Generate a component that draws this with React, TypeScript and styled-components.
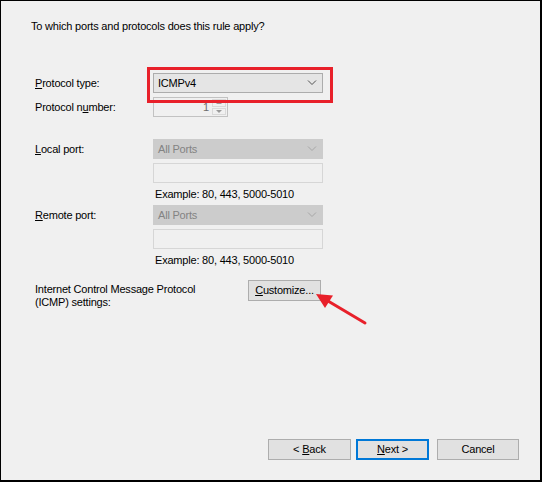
import React from "react";
import styled, { createGlobalStyle } from "styled-components";

const GlobalStyle = createGlobalStyle`
  html, body {
    margin: 0;
    padding: 0;
    background: #fff;
  }
  * {
    box-sizing: border-box;
  }
`;

const Dialog = styled.div`
  position: relative;
  width: 542px;
  height: 482px;
  display: flex;
  flex-direction: column;
  background: #f0f0f0;
  border-style: solid;
  border-color: #000;
  border-width: 1px 2px 2px 1px;
  font-family: "Liberation Sans", Arial, sans-serif;
  font-size: 11px;
  letter-spacing: -0.2px;
  line-height: 15px;
  color: #000;
`;

const Question = styled.p`
  margin: 18px 0 0 30px;
`;

const Form = styled.div`
  display: flex;
  flex-direction: column;
  padding-left: 34px;
  margin-top: 39px;
`;

const FieldRow = styled.div<{ $top: number }>`
  display: grid;
  grid-template-columns: 118px 170px;
  align-items: start;
  margin-top: ${(p) => p.$top}px;
`;

const Label = styled.span`
  height: 20px;
  line-height: 20px;
  white-space: nowrap;
`;

const Stack = styled.div`
  display: flex;
  flex-direction: column;
`;

const Select = styled.div<{ $disabled?: boolean }>`
  height: 20px;
  display: flex;
  align-items: center;
  justify-content: space-between;
  padding-left: 4px;
  border: 1px solid ${(p) => (p.$disabled ? "#cccccc" : "#acacac")};
  background: ${(p) => (p.$disabled ? "#cccccc" : "#e5e5e5")};
  color: ${(p) => (p.$disabled ? "#838383" : "#000")};
`;

const Chevron = styled.svg`
  margin-right: 5px;
`;

const TextBox = styled.div`
  height: 20px;
  margin-top: 4px;
  border: 1px solid #d6d6d6;
  background: #f0f0f0;
`;

const Hint = styled.span`
  margin-top: 4px;
  padding-left: 2px;
  white-space: nowrap;
`;

const Spinner = styled.div`
  width: 75px;
  height: 20px;
  display: flex;
  border: 1px solid #c2c2c2;
  background: #f0f0f0;
`;

const SpinValue = styled.span`
  flex: 1;
  text-align: right;
  padding-right: 3px;
  line-height: 18px;
  color: #6d6d6d;
`;

const SpinButtons = styled.div`
  width: 15px;
  display: flex;
  flex-direction: column;
  gap: 1px;
  padding: 1px 1px 1px 0;
`;

const SpinHalf = styled.div<{ $down?: boolean }>`
  flex: 1;
  display: flex;
  align-items: center;
  justify-content: center;
  border: 1px solid #d9d9d9;
  background: #f0f0f0;

  &::after {
    content: "";
    border-left: 3px solid transparent;
    border-right: 3px solid transparent;
    ${(p) =>
      p.$down ? "border-top: 3px solid #9a9a9a;" : "border-bottom: 3px solid #9a9a9a;"}
  }
`;

const IcmpRow = styled.div`
  display: flex;
  align-items: flex-start;
  margin-top: 12px;
`;

const IcmpLabel = styled.span`
  width: 213px;
  margin-top: 3px;
  line-height: 13px;
`;

const PushButton = styled.button<{ $width: number; $default?: boolean; $spaced?: boolean }>`
  width: ${(p) => p.$width}px;
  height: 21px;
  margin: 0 0 0 ${(p) => (p.$spaced ? 3 : 0)}px;
  padding: 0;
  font: inherit;
  letter-spacing: inherit;
  color: #000;
  background: #e1e1e1;
  border: ${(p) => (p.$default ? "2px solid #0078d7" : "1px solid #adadad")};
`;

const ButtonBar = styled.div`
  display: flex;
  justify-content: flex-end;
  gap: 5px;
  margin-top: auto;
  margin-bottom: 20px;
  padding-right: 21px;
`;

const Highlight = styled.div`
  position: absolute;
  left: 146px;
  top: 66px;
  width: 186px;
  height: 36px;
  border: 3px solid #e8202a;
  pointer-events: none;
`;

const Pointer = styled.svg`
  position: absolute;
  left: -1px;
  top: -1px;
  pointer-events: none;
`;

const ChevronIcon = ({ disabled }: { disabled?: boolean }) => (
  <Chevron width="10" height="6" viewBox="0 0 10 6">
    <polyline
      points="1,0.5 5,4.5 9,0.5"
      fill="none"
      stroke={disabled ? "#a6a6a6" : "#505050"}
      strokeWidth="1"
    />
  </Chevron>
);

const PortField = ({ top, label }: { top: number; label: React.ReactNode }) => (
  <FieldRow $top={top}>
    <Label>{label}</Label>
    <Stack>
      <Select $disabled>
        All Ports
        <ChevronIcon disabled />
      </Select>
      <TextBox />
      <Hint>Example: 80, 443, 5000-5010</Hint>
    </Stack>
  </FieldRow>
);

export default function App() {
  return (
    <>
      <GlobalStyle />
      <Dialog>
        <Question>To which ports and protocols does this rule apply?</Question>

        <Form>
          <FieldRow $top={0}>
            <Label>
              <u>P</u>rotocol type:
            </Label>
            <Select>
              ICMPv4
              <ChevronIcon />
            </Select>
          </FieldRow>

          <FieldRow $top={4}>
            <Label>
              Protocol n<u>u</u>mber:
            </Label>
            <Spinner>
              <SpinValue>1</SpinValue>
              <SpinButtons>
                <SpinHalf />
                <SpinHalf $down />
              </SpinButtons>
            </Spinner>
          </FieldRow>

          <PortField
            top={22}
            label={
              <>
                <u>L</u>ocal port:
              </>
            }
          />
          <PortField
            top={3}
            label={
              <>
                <u>R</u>emote port:
              </>
            }
          />

          <IcmpRow>
            <IcmpLabel>
              Internet Control Message Protocol
              <br />
              (ICMP) settings:
            </IcmpLabel>
            <PushButton $width={73}>
              <u>C</u>ustomize...
            </PushButton>
          </IcmpRow>
        </Form>

        <ButtonBar>
          <PushButton $width={83}>
            &lt; <u>B</u>ack
          </PushButton>
          <PushButton $width={73} $default>
            <u>N</u>ext &gt;
          </PushButton>
          <PushButton $width={82} $spaced>
            Cancel
          </PushButton>
        </ButtonBar>

        <Highlight />
        <Pointer width="542" height="482" viewBox="0 0 542 482">
          <line
            x1="365"
            y1="323"
            x2="328"
            y2="301"
            stroke="#e8202a"
            strokeWidth="3"
            strokeLinecap="round"
          />
          <polygon points="316,294 333,295.5 325,308" fill="#e8202a" />
        </Pointer>
      </Dialog>
    </>
  );
}
